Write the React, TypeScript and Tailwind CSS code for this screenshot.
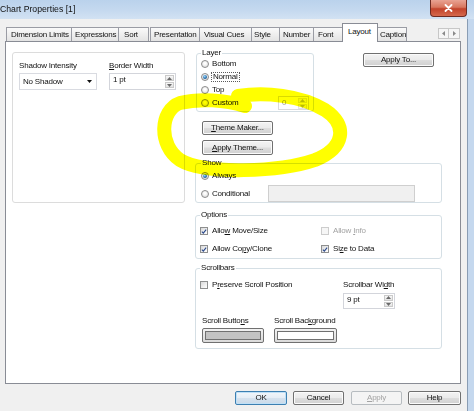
import React from "react";

type Kind = "normal" | "default" | "disabled";

function Btn({ children, className, kind = "normal" }: { children: React.ReactNode; className: string; kind?: Kind }) {
  const k =
    kind === "default"
      ? "border-[#3c7fb1] bg-[linear-gradient(180deg,#f2f6fa_0%,#e6eef6_48%,#d6e2ee_52%,#c9d9e8_100%)] shadow-[inset_0_0_0_1px_#bfe0f7] text-[#111]"
      : kind === "disabled"
      ? "border-[#b7bcc0] bg-[#f4f4f4] text-[#a3a3a3]"
      : "border-[#707070] bg-[linear-gradient(180deg,#f3f3f3_0%,#ebebeb_48%,#dddddd_52%,#d0d0d0_100%)] shadow-[inset_0_0_0_1px_#fbfbfb] text-[#111]";
  return (
    <div className={`${className} ${k} flex shrink-0 items-center justify-center rounded-[2px] border text-[8px] tracking-[-0.2px] leading-none whitespace-nowrap`}>
      {children}
    </div>
  );
}

function Radio({ on = false }: { on?: boolean }) {
  return (
    <span className="flex h-[8px] w-[8px] shrink-0 items-center justify-center rounded-full border border-[#8c8c8c] bg-[radial-gradient(circle_at_50%_40%,#ffffff_15%,#d6d6d6_100%)]">
      {on && <span className="h-[4px] w-[4px] rounded-full bg-[radial-gradient(circle_at_40%_35%,#9ed8fb_0%,#2a72b0_55%,#0f3c68_100%)]" />}
    </span>
  );
}

function Check({ on = false, disabled = false }: { on?: boolean; disabled?: boolean }) {
  return (
    <span
      className={`flex h-[8px] w-[8px] shrink-0 items-center justify-center border ${
        disabled ? "border-[#cdcdcd] bg-[#f6f6f6]" : "border-[#8e8f8f] bg-[linear-gradient(135deg,#d9d9d9,#ffffff)]"
      }`}
    >
      {on && (
        <svg width="7" height="7" viewBox="0 0 7 7">
          <path d="M1 3.6 L2.7 5.3 L6 1.2" fill="none" stroke="#2b4a8c" strokeWidth="1.3" />
        </svg>
      )}
    </span>
  );
}

function Arrow({ up, disabled }: { up: boolean; disabled: boolean }) {
  return (
    <div
      className={`flex flex-1 items-center justify-center border ${
        disabled ? "border-[#e3e3e3] bg-[#f7f7f7]" : "border-[#cacaca] bg-[linear-gradient(180deg,#f7f7f7,#e3e3e3)]"
      }`}
    >
      <svg width="5" height="3" viewBox="0 0 5 3">
        <path d={up ? "M0 3 L2.5 0 L5 3 Z" : "M0 0 L2.5 3 L5 0 Z"} fill={disabled ? "#bdbdbd" : "#6a6a6a"} />
      </svg>
    </div>
  );
}

function Spin({ value, className, disabled = false }: { value: string; className: string; disabled?: boolean }) {
  return (
    <div className={`${className} flex shrink-0 border bg-white ${disabled ? "border-[#dadada] text-[#a0a0a0]" : "border-[#d3d5db] text-[#111]"}`}>
      <span className="flex-1 pl-[3px] pt-[1px] text-[8px] leading-[10px]">{value}</span>
      <div className="flex w-[11px] flex-col gap-px p-px">
        <Arrow up disabled={disabled} />
        <Arrow up={false} disabled={disabled} />
      </div>
    </div>
  );
}

function ColorBtn({ className, swatch }: { className: string; swatch: string }) {
  return (
    <div className={`${className} shrink-0 rounded-[2px] border border-[#707070] bg-[linear-gradient(180deg,#f2f2f2,#dadada)] p-[2px]`}>
      <div className={`h-full w-full border border-[#707070] ${swatch}`} />
    </div>
  );
}

function Legend({ children }: { children: React.ReactNode }) {
  return <legend className="px-[1px] text-[8px] leading-[10px] text-[#111]">{children}</legend>;
}

export default function App() {
  return (
    <div className="relative flex h-[411px] w-[474px] flex-col overflow-hidden bg-[#f0f0f0] font-['Liberation_Sans',Arial,sans-serif] text-[#111]">
      {/* Title bar */}
      <div className="flex h-[19px] shrink-0 items-start bg-[linear-gradient(180deg,#bad2ec_0%,#c5d9ef_55%,#d2e2f3_100%)]">
        <span className="text-[8.7px] leading-[19px] text-[#111]">Chart Properties [1]</span>
        <div className="ml-auto mr-[7px] flex h-[17px] w-[37px] items-center justify-center rounded-b-[4px] border border-t-0 border-[#6e2b22] bg-[linear-gradient(180deg,#e9a393_0%,#d8775f_45%,#c2432b_55%,#d5694d_100%)]">
          <svg width="9" height="8" viewBox="0 0 9 8">
            <path d="M1.5 1 L7.5 7 M7.5 1 L1.5 7" stroke="#fff" strokeWidth="1.8" strokeLinecap="round" />
          </svg>
        </div>
      </div>

      <div className="flex min-h-0 flex-1">
        <div className="flex w-[467px] flex-col">
          {/* Tabs */}
          <div className="mt-[4px] flex h-[18px] items-end pl-[6px] text-[8px] tracking-[-0.2px]">
            <div className="h-[14px] w-[66px] border border-b-0 border-[#9a9ca4] bg-[linear-gradient(180deg,#fafafa,#e3e3e3)] pl-[4px] leading-[13px] whitespace-nowrap">Dimension Limits</div>
            <div className="-ml-px h-[14px] w-[48px] border border-b-0 border-[#9a9ca4] bg-[linear-gradient(180deg,#fafafa,#e3e3e3)] pl-[3px] leading-[13px] whitespace-nowrap">Expressions</div>
            <div className="-ml-px h-[14px] w-[31px] border border-b-0 border-[#9a9ca4] bg-[linear-gradient(180deg,#fafafa,#e3e3e3)] pl-[5px] leading-[13px] whitespace-nowrap">Sort</div>
            <div className="ml-px h-[14px] w-[50px] border border-b-0 border-[#9a9ca4] bg-[linear-gradient(180deg,#fafafa,#e3e3e3)] pl-[3px] leading-[13px] whitespace-nowrap">Presentation</div>
            <div className="-ml-px h-[14px] w-[53px] border border-b-0 border-[#9a9ca4] bg-[linear-gradient(180deg,#fafafa,#e3e3e3)] pl-[4px] leading-[13px] whitespace-nowrap">Visual Cues</div>
            <div className="-ml-px h-[14px] w-[29px] border border-b-0 border-[#9a9ca4] bg-[linear-gradient(180deg,#fafafa,#e3e3e3)] pl-[2px] leading-[13px] whitespace-nowrap">Style</div>
            <div className="-ml-px h-[14px] w-[35px] border border-b-0 border-[#9a9ca4] bg-[linear-gradient(180deg,#fafafa,#e3e3e3)] pl-[3px] leading-[13px] whitespace-nowrap">Number</div>
            <div className="-ml-px h-[14px] w-[31px] border border-b-0 border-[#9a9ca4] bg-[linear-gradient(180deg,#fafafa,#e3e3e3)] pl-[4px] leading-[13px] whitespace-nowrap">Font</div>
            <div className="relative z-10 -mb-px -ml-[2px] h-[19px] w-[36px] border border-b-0 border-[#898c95] bg-white pl-[5px] leading-[15px] whitespace-nowrap">Layout</div>
            <div className="-ml-[2px] h-[14px] w-[31px] border border-b-0 border-[#9a9ca4] bg-[linear-gradient(180deg,#fafafa,#e3e3e3)] pl-[3px] leading-[13px] whitespace-nowrap">Caption</div>
            <div className="mb-[2px] ml-auto mr-[7px] flex">
              <div className="flex h-[11px] w-[11px] items-center justify-center border border-[#c7c7c7] bg-[#f5f5f5]">
                <svg width="3" height="5" viewBox="0 0 3 5"><path d="M3 0 L0 2.5 L3 5 Z" fill="#8a8a8a" /></svg>
              </div>
              <div className="flex h-[11px] w-[11px] items-center justify-center border border-l-0 border-[#c7c7c7] bg-[#f5f5f5]">
                <svg width="3" height="5" viewBox="0 0 3 5"><path d="M0 0 L3 2.5 L0 5 Z" fill="#8a8a8a" /></svg>
              </div>
            </div>
          </div>

          {/* Panel */}
          <div className="ml-[5px] flex h-[343px] w-[456px] border border-[#898c95] bg-white pl-[6px] pt-[6px] text-[8px] tracking-[-0.2px]">
            {/* Left group */}
            <div className="mt-[4px] flex h-[151px] w-[173px] shrink-0 rounded-[3px] border border-[#dcdcdc] pl-[6px] pt-[8px]">
              <div className="flex w-[78px] flex-col">
                <span className="h-[10px] leading-[10px]">Shadow Intensity</span>
                <div className="mt-[2px] flex h-[17px] w-[78px] items-center border border-[#d9dbe1] pl-[3px] pr-[4px]">
                  <span className="flex-1 leading-none">No Shadow</span>
                  <svg width="5" height="3" viewBox="0 0 5 3"><path d="M0 0 L2.5 3 L5 0 Z" fill="#111" /></svg>
                </div>
              </div>
              <div className="ml-[12px] flex w-[67px] flex-col">
                <span className="h-[10px] leading-[10px]"><span className="underline">B</span>order Width</span>
                <Spin value="1 pt" className="mt-[2px] h-[17px] w-[67px]" />
              </div>
            </div>

            {/* Right column */}
            <div className="ml-[10px] flex w-[247px] shrink-0 flex-col">
              <div className="flex items-start">
                <fieldset className="ml-px w-[118px] rounded-[3px] border border-[#d5dfe5] pb-px pl-[4px]">
                  <Legend>Layer</Legend>
                  <div className="flex h-[12px] items-center"><Radio /><span className="ml-[3px] leading-none">Bottom</span></div>
                  <div className="flex h-[13px] items-center"><Radio on /><span className="ml-[2px] border border-dotted border-[#5a5a5a] px-px leading-[8px]">Normal</span></div>
                  <div className="flex h-[13px] items-center"><Radio /><span className="ml-[3px] leading-none">Top</span></div>
                  <div className="flex h-[14px] items-center">
                    <Radio /><span className="ml-[3px] leading-none">Custom</span>
                    <Spin value="0" disabled className="ml-auto mr-[4px] h-[14px] w-[31px]" />
                  </div>
                </fieldset>
                <Btn className="ml-[49px] mt-[5px] h-[14px] w-[71px]">Apply To...</Btn>
              </div>

              <Btn className="ml-[7px] mt-[9px] h-[14px] w-[71px]"><span className="underline">T</span>heme Maker...</Btn>
              <Btn className="ml-[7px] mt-[5px] h-[15px] w-[71px]"><span className="underline">A</span>pply Theme...</Btn>

              <fieldset className="mt-[3px] w-[247px] rounded-[3px] border border-[#d5dfe5] pl-[5px]">
                <Legend>Show</Legend>
                <div className="flex h-[16px] items-center"><Radio on /><span className="ml-[3px] leading-none">Always</span></div>
                <div className="mt-px flex h-[17px] items-center">
                  <Radio /><span className="ml-[3px] w-[56px] leading-none">Conditional</span>
                  <div className="h-[17px] w-[147px] border border-[#cfcfcf] bg-[#f0f0f0]" />
                </div>
              </fieldset>

              <fieldset className="mt-[7px] w-[247px] rounded-[3px] border border-[#d5dfe5] pl-[4px] pt-[2px]">
                <Legend>Options</Legend>
                <div className="flex h-[18px] items-center">
                  <div className="flex w-[121px] items-center"><Check on /><span className="ml-[4px] leading-none">Allo<span className="underline">w</span> Move/Size</span></div>
                  <div className="flex items-center"><Check disabled /><span className="ml-[4px] leading-none text-[#a3a3a3]">Allow <span className="underline">I</span>nfo</span></div>
                </div>
                <div className="flex h-[18px] items-center">
                  <div className="flex w-[121px] items-center"><Check on /><span className="ml-[4px] leading-none">Allow Co<span className="underline">p</span>y/Clone</span></div>
                  <div className="flex items-center"><Check on /><span className="ml-[4px] leading-none">Si<span className="underline">z</span>e to Data</span></div>
                </div>
              </fieldset>

              <fieldset className="mt-[4px] w-[247px] rounded-[3px] border border-[#d5dfe5] pb-[5px] pl-[4px] pt-[7px]">
                <Legend>Scrollbars</Legend>
                <div className="flex items-start">
                  <div className="flex h-[10px] w-[143px] items-center"><Check /><span className="ml-[4px] leading-none">P<span className="underline">r</span>eserve Scroll Position</span></div>
                  <div className="flex flex-col">
                    <span className="h-[10px] leading-[10px]">Scrollbar Wi<span className="underline">d</span>th</span>
                    <Spin value="9 pt" className="mt-[3px] h-[16px] w-[52px]" />
                  </div>
                </div>
                <div className="ml-[2px] mt-[7px] flex">
                  <div className="flex w-[72px] flex-col">
                    <span className="h-[10px] leading-[10px]">Scroll Butto<span className="underline">n</span>s</span>
                    <ColorBtn className="mt-[2px] h-[15px] w-[62px]" swatch="bg-[#c3c3c3]" />
                  </div>
                  <div className="flex flex-col">
                    <span className="h-[10px] leading-[10px]">Scroll Bac<span className="underline">k</span>ground</span>
                    <ColorBtn className="mt-[2px] h-[15px] w-[63px]" swatch="bg-white" />
                  </div>
                </div>
              </fieldset>
            </div>
          </div>

          {/* Bottom buttons */}
          <div className="mt-[7px] flex h-[14px]">
            <Btn kind="default" className="ml-[235px] h-[14px] w-[52px]">OK</Btn>
            <Btn className="ml-[6px] h-[14px] w-[51px]">Cancel</Btn>
            <Btn kind="disabled" className="ml-[7px] h-[14px] w-[51px]"><span className="underline">A</span>pply</Btn>
            <Btn className="ml-[6px] h-[14px] w-[53px]">Help</Btn>
          </div>
        </div>
        <div className="w-[7px] border-l border-[#8a9db4] bg-[#c5d8ee]" />
      </div>

      {/* Yellow highlight marker */}
      <svg className="pointer-events-none absolute inset-0 mix-blend-multiply" width="474" height="411" viewBox="0 0 474 411">
        <path
          d="M245 106 C225 100 200 98 180 103 C160 110 158 145 180 160 C205 175 280 172 315 160 C345 148 348 125 325 110 C300 95 265 92 238 96"
          fill="none"
          stroke="#ffff00"
          strokeWidth="14"
          strokeLinecap="round"
          strokeLinejoin="round"
        />
      </svg>
    </div>
  );
}
